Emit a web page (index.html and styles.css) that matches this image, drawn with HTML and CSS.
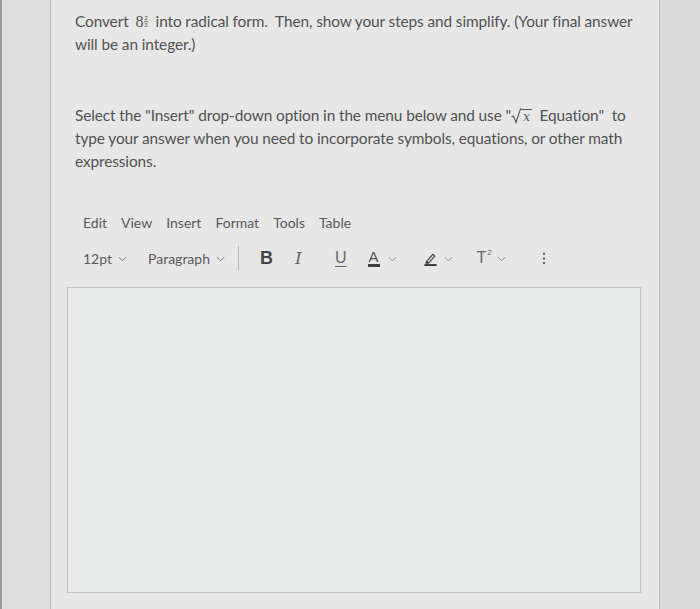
FILE: index.html
```html
<!DOCTYPE html>
<html lang="en">
<head>
<meta charset="utf-8">
<title>Question</title>
<link rel="stylesheet" href="styles.css">
</head>
<body>
<div class="screen">
  <div class="gutter-left"></div>
  <main class="panel">
    <p class="q">Convert <span class="pow">8</span><span class="frac"><span class="num">2</span><span class="den">3</span></span> into radical form.&nbsp; Then, show your steps and simplify. (Your final answer will be an integer.)</p>
    <p class="q instr">Select the "Insert" drop-down option in the menu below and use "<span class="sqrt"><svg class="rad" viewBox="0 0 10 16" width="10" height="16"><path d="M0.5 9 L2.5 8 L5 14.5 L9.5 0.8 L10 0.8" fill="none" stroke="#555" stroke-width="1.1"/></svg><span class="radicand">x</span></span>&nbsp; Equation"&nbsp; to type your answer when you need to incorporate symbols, equations, or other math expressions.</p>

    <div class="editor">
      <nav class="menubar">
        <span>Edit</span><span>View</span><span>Insert</span><span>Format</span><span>Tools</span><span>Table</span>
      </nav>
      <div class="toolbar">
        <span class="drop">12pt <svg class="chev" viewBox="0 0 10 6" width="9" height="6"><path d="M1 1 L5 5 L9 1" fill="none" stroke="#777" stroke-width="1.1"/></svg></span>
        <span class="drop para">Paragraph <svg class="chev" viewBox="0 0 10 6" width="9" height="6"><path d="M1 1 L5 5 L9 1" fill="none" stroke="#777" stroke-width="1.1"/></svg></span>
        <span class="sep"></span>
        <span class="tb bold">B</span>
        <span class="tb ital">I</span>
        <span class="tb under">U</span>
        <span class="tb fc"><span class="fcA">A</span><svg class="chev" viewBox="0 0 10 6" width="9" height="6"><path d="M1 1 L5 5 L9 1" fill="none" stroke="#888" stroke-width="1.1"/></svg></span>
        <span class="tb hl"><svg viewBox="0 0 16 16" width="15" height="15"><path d="M4 11 L10.5 3.5 L12.5 5.5 L6 13 Z M4 11 L3 13 L6 13" fill="none" stroke="#444" stroke-width="1.3" stroke-linejoin="round"/><rect x="1.5" y="14" width="13" height="2" fill="#333"/></svg><svg class="chev" viewBox="0 0 10 6" width="9" height="6"><path d="M1 1 L5 5 L9 1" fill="none" stroke="#888" stroke-width="1.1"/></svg></span>
        <span class="tb sup"><span class="tT">T<span class="two">2</span></span><svg class="chev" viewBox="0 0 10 6" width="9" height="6"><path d="M1 1 L5 5 L9 1" fill="none" stroke="#888" stroke-width="1.1"/></svg></span>
        <span class="tb more"><svg viewBox="0 0 4 16" width="4" height="15"><circle cx="2" cy="3" r="1.2" fill="#555"/><circle cx="2" cy="8" r="1.2" fill="#555"/><circle cx="2" cy="13" r="1.2" fill="#555"/></svg></span>
      </div>
      <div class="area"></div>
    </div>
  </main>
  <div class="gutter-right"></div>
</div>
</body>
</html>
```
FILE: styles.css
```css
html, body {
  margin: 0;
  padding: 0;
  height: 100%;
}
body {
  background: #dcdcdc;
  font-family: Lato, "Open Sans", "Liberation Sans", sans-serif;
  color: #525252;
}
.screen {
  display: flex;
  height: 609px;
  overflow: hidden;
}
.gutter-left {
  width: 50px;
  background: #dedede;
  border-left: 2px solid #9a9a9a;
  box-sizing: border-box;
}
.gutter-right {
  width: 40px;
  background: #d9d9d9;
}
.panel {
  flex: 1;
  background: #e7e7e7;
  border-left: 1px solid #b9b9b9;
  border-right: 1px solid #bdbdbd;
  padding: 10px 14px 0 24px;
  box-sizing: border-box;
}
.q {
  margin: 0;
  font-size: 15.4px;
  line-height: 23px;
  letter-spacing: -0.1px;
}
.instr {
  margin-top: 48px;
}
.pow {
  font-family: "Liberation Serif", serif;
  font-size: 16px;
  margin-left: 3px;
}
.frac {
  display: inline-flex;
  flex-direction: column;
  align-items: center;
  vertical-align: 7px;
  font-size: 6px;
  line-height: 6px;
  margin: 0 4px 0 1px;
}
.num {
  border-bottom: 1px solid #777;
}
.sqrt {
  display: inline-flex;
  align-items: flex-end;
  vertical-align: -3px;
}
.rad {
  display: block;
}
.radicand {
  font-family: "DejaVu Serif", serif;
  font-style: italic;
  font-size: 12px;
  line-height: 14px;
  border-top: 1px solid #555;
  padding: 0 2px;
}
.editor {
  margin-top: 40px;
  margin-left: -8px;
  margin-right: 4px;
}
.menubar {
  display: flex;
  gap: 14px;
  padding-left: 16px;
  font-size: 14px;
  line-height: 20px;
  color: #595959;
}
.toolbar {
  display: flex;
  align-items: center;
  height: 30px;
  margin-top: 10px;
  padding-left: 16px;
  font-size: 14px;
  color: #5b5b5b;
}
.drop {
  display: inline-flex;
  align-items: center;
  gap: 6px;
}
.para {
  margin-left: 21px;
}
.chev {
  display: block;
  margin-top: 1px;
}
.sep {
  width: 1px;
  height: 24px;
  background: #b5b5b5;
  margin: 0 21px 0 13px;
}
.tb {
  display: inline-flex;
  align-items: center;
  height: 24px;
}
.bold {
  font-family: "Liberation Sans", sans-serif;
  font-size: 18px;
  font-weight: bold;
  color: #444;
  width: 22px;
}
.ital {
  font-family: "DejaVu Serif", serif;
  font-style: italic;
  font-size: 17px;
  color: #666;
  margin-left: 13px;
  width: 22px;
}
.under {
  font-family: "Liberation Sans", sans-serif;
  font-size: 16px;
  color: #666;
  text-decoration: underline;
  text-underline-offset: 3px;
  margin-left: 18px;
}
.fc {
  margin-left: 21px;
  gap: 8px;
}
.fcA {
  font-family: "Liberation Sans", sans-serif;
  font-size: 15px;
  color: #555;
  border-bottom: 3px solid #3f3f3f;
  line-height: 15px;
  padding: 0 1px;
}
.hl {
  margin-left: 26px;
  gap: 6px;
}
.sup {
  margin-left: 24px;
  font-family: "Liberation Sans", sans-serif;
  font-size: 16px;
  color: #666;
  gap: 5px;
}
.tT {
  display: inline-flex;
  align-items: flex-start;
  line-height: 16px;
}
.two {
  font-size: 8px;
  line-height: 8px;
  margin-left: 1px;
  margin-top: -1px;
}
.more {
  margin-left: 36px;
}
.area {
  margin-top: 14px;
  height: 304px;
  background: #e9eaea;
  border: 1px solid #c2c2c2;
}
```
